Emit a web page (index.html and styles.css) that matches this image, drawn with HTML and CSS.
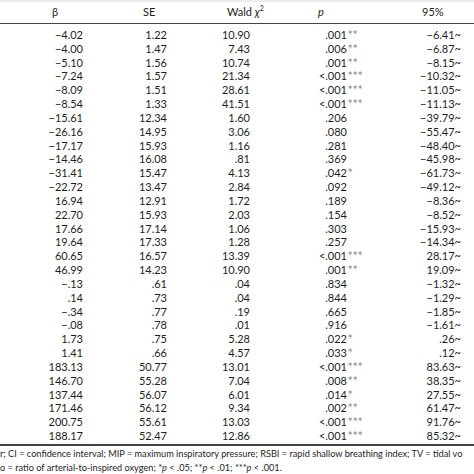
FILE: index.html
```html
<!DOCTYPE html>
<html>
<head>
<meta charset="utf-8">
<link rel="stylesheet" href="styles.css">
</head>
<body>
<div class="band"></div>
<div class="table">
  <div class="row head">
    <div class="h h-beta">β</div>
    <div class="h h-se">SE</div>
    <div class="h h-wald">Wald <i>χ</i><sup>2</sup></div>
    <div class="h h-p"><i>p</i></div>
    <div class="h h-ci">95%</div>
  </div>
  <div class="body">
    <div class="row"><div class="n">−4.02</div><div class="n">1.22</div><div class="n">10.90</div><div class="pv">.001</div><div class="st">**</div><div class="ci">−6.41~</div></div>
    <div class="row"><div class="n">−4.00</div><div class="n">1.47</div><div class="n">7.43</div><div class="pv">.006</div><div class="st">**</div><div class="ci">−6.87~</div></div>
    <div class="row"><div class="n">−5.10</div><div class="n">1.56</div><div class="n">10.74</div><div class="pv">.001</div><div class="st">**</div><div class="ci">−8.15~</div></div>
    <div class="row"><div class="n">−7.24</div><div class="n">1.57</div><div class="n">21.34</div><div class="pv">&lt;.001</div><div class="st">***</div><div class="ci">−10.32~</div></div>
    <div class="row"><div class="n">−8.09</div><div class="n">1.51</div><div class="n">28.61</div><div class="pv">&lt;.001</div><div class="st">***</div><div class="ci">−11.05~</div></div>
    <div class="row"><div class="n">−8.54</div><div class="n">1.33</div><div class="n">41.51</div><div class="pv">&lt;.001</div><div class="st">***</div><div class="ci">−11.13~</div></div>
    <div class="row"><div class="n">−15.61</div><div class="n">12.34</div><div class="n">1.60</div><div class="pv">.206</div><div class="st"></div><div class="ci">−39.79~</div></div>
    <div class="row"><div class="n">−26.16</div><div class="n">14.95</div><div class="n">3.06</div><div class="pv">.080</div><div class="st"></div><div class="ci">−55.47~</div></div>
    <div class="row"><div class="n">−17.17</div><div class="n">15.93</div><div class="n">1.16</div><div class="pv">.281</div><div class="st"></div><div class="ci">−48.40~</div></div>
    <div class="row"><div class="n">−14.46</div><div class="n">16.08</div><div class="n">.81</div><div class="pv">.369</div><div class="st"></div><div class="ci">−45.98~</div></div>
    <div class="row"><div class="n">−31.41</div><div class="n">15.47</div><div class="n">4.13</div><div class="pv">.042</div><div class="st">*</div><div class="ci">−61.73~</div></div>
    <div class="row"><div class="n">−22.72</div><div class="n">13.47</div><div class="n">2.84</div><div class="pv">.092</div><div class="st"></div><div class="ci">−49.12~</div></div>
    <div class="row"><div class="n">16.94</div><div class="n">12.91</div><div class="n">1.72</div><div class="pv">.189</div><div class="st"></div><div class="ci">−8.36~</div></div>
    <div class="row"><div class="n">22.70</div><div class="n">15.93</div><div class="n">2.03</div><div class="pv">.154</div><div class="st"></div><div class="ci">−8.52~</div></div>
    <div class="row"><div class="n">17.66</div><div class="n">17.14</div><div class="n">1.06</div><div class="pv">.303</div><div class="st"></div><div class="ci">−15.93~</div></div>
    <div class="row"><div class="n">19.64</div><div class="n">17.33</div><div class="n">1.28</div><div class="pv">.257</div><div class="st"></div><div class="ci">−14.34~</div></div>
    <div class="row"><div class="n">60.65</div><div class="n">16.57</div><div class="n">13.39</div><div class="pv">&lt;.001</div><div class="st">***</div><div class="ci">28.17~</div></div>
    <div class="row"><div class="n">46.99</div><div class="n">14.23</div><div class="n">10.90</div><div class="pv">.001</div><div class="st">**</div><div class="ci">19.09~</div></div>
    <div class="row"><div class="n">−.13</div><div class="n">.61</div><div class="n">.04</div><div class="pv">.834</div><div class="st"></div><div class="ci">−1.32~</div></div>
    <div class="row"><div class="n">.14</div><div class="n">.73</div><div class="n">.04</div><div class="pv">.844</div><div class="st"></div><div class="ci">−1.29~</div></div>
    <div class="row"><div class="n">−.34</div><div class="n">.77</div><div class="n">.19</div><div class="pv">.665</div><div class="st"></div><div class="ci">−1.85~</div></div>
    <div class="row"><div class="n">−.08</div><div class="n">.78</div><div class="n">.01</div><div class="pv">.916</div><div class="st"></div><div class="ci">−1.61~</div></div>
    <div class="row"><div class="n">1.73</div><div class="n">.75</div><div class="n">5.28</div><div class="pv">.022</div><div class="st">*</div><div class="ci">.26~</div></div>
    <div class="row"><div class="n">1.41</div><div class="n">.66</div><div class="n">4.57</div><div class="pv">.033</div><div class="st">*</div><div class="ci">.12~</div></div>
    <div class="row"><div class="n">183.13</div><div class="n">50.77</div><div class="n">13.01</div><div class="pv">&lt;.001</div><div class="st">***</div><div class="ci">83.63~</div></div>
    <div class="row"><div class="n">146.70</div><div class="n">55.28</div><div class="n">7.04</div><div class="pv">.008</div><div class="st">**</div><div class="ci">38.35~</div></div>
    <div class="row"><div class="n">137.44</div><div class="n">56.07</div><div class="n">6.01</div><div class="pv">.014</div><div class="st">*</div><div class="ci">27.55~</div></div>
    <div class="row"><div class="n">171.46</div><div class="n">56.12</div><div class="n">9.34</div><div class="pv">.002</div><div class="st">**</div><div class="ci">61.47~</div></div>
    <div class="row"><div class="n">200.75</div><div class="n">55.61</div><div class="n">13.03</div><div class="pv">&lt;.001</div><div class="st">***</div><div class="ci">91.76~</div></div>
    <div class="row"><div class="n">188.17</div><div class="n">52.47</div><div class="n">12.86</div><div class="pv">&lt;.001</div><div class="st">***</div><div class="ci">85.32~</div></div>
  </div>
</div>
<div class="notes">
  <div class="note">r; CI = confidence interval; MIP = maximum inspiratory pressure; RSBI = rapid shallow breathing index; TV = tidal vo</div>
  <div class="note">o = ratio of arterial-to-inspired oxygen; *<i>p</i> &lt; .05; **<i>p</i> &lt; .01; ***<i>p</i> &lt; .001.</div>
</div>
</body>
</html>
```

FILE: styles.css
```css
html, body {
  margin: 0;
  padding: 0;
  background: #fff;
  width: 474px;
  height: 474px;
  overflow: hidden;
}
body {
  font-family: Lato, "Open Sans", sans-serif;
  color: #1e1e1e;
  font-size: 11px;
}
.band {
  height: 2px;
  background: #ebebeb;
}
.table {
  width: 474px;
}
.row {
  display: grid;
  grid-template-columns: 92px 84px 83px 88px 23px 91px;
  height: 13.83px;
  line-height: 13.83px;
  white-space: nowrap;
}
.head {
  height: 21px;
  line-height: 20px;
  border-bottom: 1.5px solid #444;
}
.h {
  text-align: left;
}
.h-beta { padding-left: 52px; }
.h-se { padding-left: 51px; }
.h-wald { padding-left: 51px; }
.h-p { grid-column: 4 / span 2; padding-left: 59px; }
.h-ci { padding-left: 52px; }
.h sup {
  font-size: 7px;
  line-height: 0;
  vertical-align: 5px;
}
.body {
  padding-top: 4px;
  padding-bottom: 1px;
  border-bottom: 2px solid #444;
}
.n {
  text-align: right;
  padding-right: 9px;
}
.pv {
  text-align: right;
}
.st {
  color: #8c8c8c;
  font-size: 12.5px;
  position: relative;
  top: 1px;
  padding-left: 0.5px;
  letter-spacing: -0.3px;
}
.ci {
  text-align: right;
}
.notes {
  padding-top: 1px;
  font-size: 9.2px;
}
.note {
  height: 14.5px;
  line-height: 14.5px;
  white-space: nowrap;
}
```
